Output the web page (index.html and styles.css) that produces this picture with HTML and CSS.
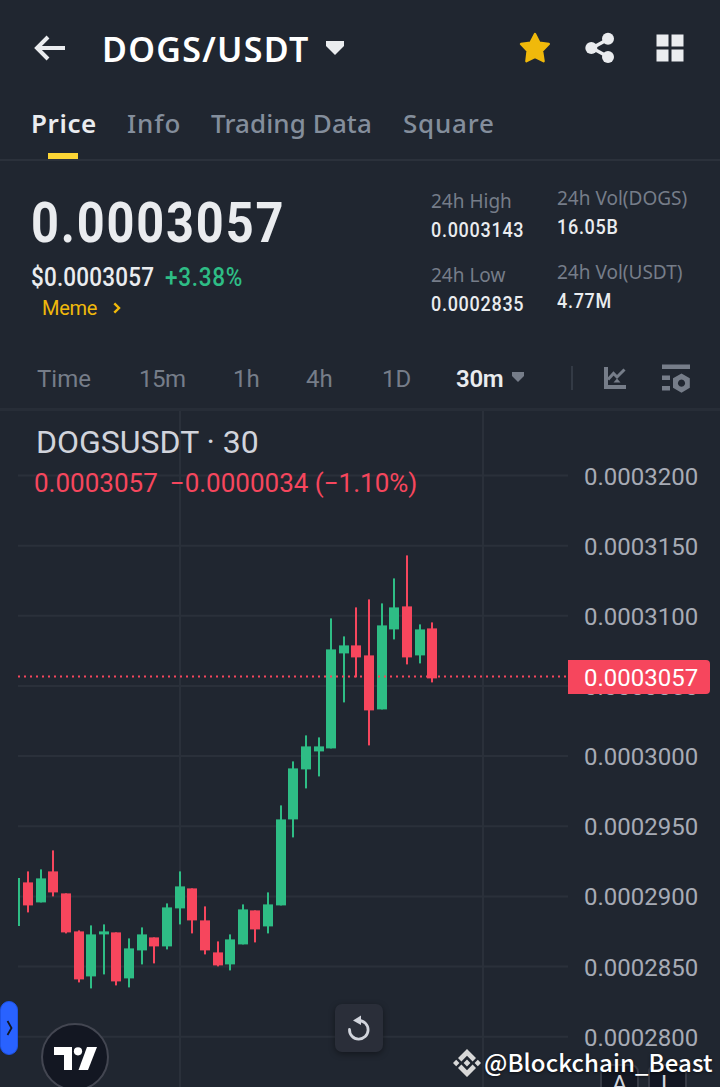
FILE: index.html
```html
<!DOCTYPE html>
<html lang="en">
<head>
  <meta charset="UTF-8" />
  <meta name="viewport" content="width=device-width, initial-scale=1.0"/>
  <title>DOGS/USDT</title>
  <link rel="stylesheet" href="styles.css">
</head>
<body>
  <header class="topbar">
    <svg class="back" width="32" height="26" viewBox="0 0 32 26"><path d="M14 2 L3 13 L14 24 M3 13 H31" fill="none" stroke="#eaecef" stroke-width="4"/></svg>
    <h1>DOGS/USDT</h1>
    <svg class="caret" width="18" height="14" viewBox="0 0 18 14"><path d="M0 0H18V5L9 14L0 5Z" fill="#eaecef"/></svg>
    <svg class="star" width="32" height="32" viewBox="0 0 32 32"><path d="M16 2 L20.3 10.6 L29.8 12 L23 18.8 L24.6 29.2 L16 25 L7.4 29.2 L8.6 18.8 L2 12 L11.6 10.6 Z" fill="#f0b90b" stroke="#f0b90b" stroke-width="2.4" stroke-linejoin="round"/></svg>
    <svg class="share" width="30" height="32" viewBox="0 0 30 32"><path d="M23.5 7 L7 16 L23.5 25" fill="none" stroke="#eaecef" stroke-width="3.4"/><circle cx="6.3" cy="16" r="6" fill="#eaecef"/><circle cx="23" cy="6.8" r="6" fill="#eaecef"/><circle cx="23" cy="25" r="6" fill="#eaecef"/></svg>
    <svg class="grid" width="28" height="28" viewBox="0 0 28 28"><path d="M0.5 0.5h12v12h-12zM15.5 0.5h12v12h-12zM0.5 15.5h12v12h-12zM15.5 15.5h12v12h-12z" fill="#eaecef"/></svg>
  </header>

  <nav class="tabs">
    <a class="tab active">Price</a>
    <a class="tab info">Info</a>
    <a class="tab trading">Trading Data</a>
    <a class="tab square">Square</a>
  </nav>

  <section class="summary">
    <div class="price-box">
      <div class="price">0.0003057</div>
      <div class="sub"><span class="usd">$0.0003057</span><span class="change">+3.38%</span></div>
      <div class="tag"><span>Meme</span><svg width="8" height="12" viewBox="0 0 8 12"><path d="M1.3 1.3 L6 6 L1.3 10.7" fill="none" stroke="#f0b90b" stroke-width="2.4"/></svg></div>
    </div>
    <dl class="stats range">
      <dt>24h High</dt><dd>0.0003143</dd>
      <dt>24h Low</dt><dd>0.0002835</dd>
    </dl>
    <dl class="stats volume">
      <dt>24h Vol(DOGS)</dt><dd>16.05B</dd>
      <dt>24h Vol(USDT)</dt><dd>4.77M</dd>
    </dl>
  </section>

  <div class="intervals">
    <span class="t-time">Time</span>
    <span class="t-15m">15m</span>
    <span class="t-1h">1h</span>
    <span class="t-4h">4h</span>
    <span class="t-1d">1D</span>
    <span class="t-30m">30m</span>
    <svg class="small-caret" width="12" height="10" viewBox="0 0 12 10"><path d="M0 0H12V4L6 10L0 4Z" fill="#767d89"/></svg>
    <i class="divider"></i>
    <svg class="ind" width="22" height="22" viewBox="0 0 22 22"><path d="M2 0V20H22" fill="none" stroke="#767d89" stroke-width="4"/><path d="M4 12.5L9.5 6.5L13 10L20.5 2.5" fill="none" stroke="#767d89" stroke-width="3"/><path d="M9.5 15.5L13 11.5L16.5 15.5Z" fill="#767d89"/></svg>
    <svg class="settings" width="28" height="29" viewBox="0 0 28 29"><path d="M0 0.5h28v4.5H0zM0 11.5h8v4.5H0zM0 22h8v4.5H0z" fill="#767d89"/><path d="M19.5 9.5L27.8 14.2V23.8L19.5 28.8L11 23.8V14.2ZM19.5 15.6a3.6 3.6 0 1 0 .01 0Z" fill="#767d89" fill-rule="evenodd"/></svg>
  </div>

  <main class="chart">
    <svg class="plot" width="720" height="676" viewBox="0 411 720 676">
      <g id="gridlines"></g>
      <g id="candles"></g>
      <path class="last-line" d="M18 676.5H568"/>
      <g id="scale"></g>
      <path d="M568 660H706a4 4 0 0 1 4 4V690a4 4 0 0 1 -4 4H568Z" fill="#f6465d"/>
      <text class="last-price" x="584" y="686">0.0003057</text>
    </svg>

    <div class="legend">
      <div class="symbol">DOGSUSDT · 30</div>
      <div class="ohlc"><span>0.0003057</span><span>−0.0000034 (−1.10%)</span></div>
    </div>

    <div class="drawer"><svg width="8" height="16" viewBox="0 0 8 16"><path d="M1.5 1L5.5 8L1.5 15" fill="none" stroke="#131722" stroke-width="1.8"/></svg></div>
    <div class="tv-logo"><svg width="44" height="24" viewBox="0 0 44 24"><path d="M0 0H18V23H10V8H0Z" fill="#fff"/><circle cx="24" cy="4.3" r="4.1" fill="#fff"/><path d="M33 0H43L34 23H24.5Z" fill="#fff"/></svg></div>
    <div class="reset"><svg width="24" height="28" viewBox="0 0 24 28"><path d="M2.5 15.5A9.3 9.3 0 1 0 12 6.5" fill="none" stroke="#d1d4dc" stroke-width="2.8" stroke-linecap="round"/><path d="M14 1.5V11L6 6.6Z" fill="#d1d4dc"/></svg></div>
    <div class="modes"><b>A</b><b>L</b></div>
    <div class="watermark">
      <svg width="28" height="28" viewBox="0 0 28 28"><g fill="#d8d8d8"><path d="M14 0L23 9L19.6 12.4L14 6.8L8.4 12.4L5 9Z"/><path d="M14 28L23 19L19.6 15.6L14 21.2L8.4 15.6L5 19Z"/><path d="M14 10.6L17.4 14L14 17.4L10.6 14ZM3.2 10.8L6.4 14L3.2 17.2L0 14ZM24.8 10.8L28 14L24.8 17.2L21.6 14Z"/></g></svg>
      <span>@Blockchain_Beast</span>
    </div>
  </main>

  <script>
    // [x, body top, body bottom, high, low, up]
    const candles = [
      [23, 882, 905, 871, 912, 0], [36, 878, 902, 869, 902, 1], [48, 871, 892, 850, 896, 0],
      [61, 893, 932, 893, 933, 0], [74, 931, 979, 930, 982, 0], [86, 934, 976, 925, 988, 1],
      [99, 931, 934, 924, 974, 1], [111, 932, 981, 932, 985, 0], [124, 948, 978, 938, 987, 1],
      [137, 934, 950, 927, 964, 1], [149, 937, 946, 937, 963, 0], [162, 907, 946, 903, 949, 1],
      [175, 886, 908, 871, 924, 1], [187, 888, 920, 888, 933, 0], [200, 920, 950, 906, 954, 0],
      [213, 952, 965, 941, 966, 0], [225, 939, 964, 934, 970, 1], [238, 909, 944, 904, 944, 1],
      [250, 910, 929, 910, 942, 0], [263, 904, 926, 892, 933, 1], [276, 819, 905, 805, 905, 1],
      [288, 768, 819, 761, 837, 1], [301, 746, 769, 735, 788, 1], [314, 746, 751, 737, 776, 1],
      [326, 649, 748, 618, 748, 1], [339, 645, 653, 636, 702, 1], [351, 645, 657, 607, 677, 0],
      [364, 655, 710, 599, 745, 0], [377, 625, 709, 603, 709, 1], [389, 607, 629, 578, 639, 1],
      [402, 606, 657, 555, 664, 0], [415, 629, 655, 624, 663, 1], [427, 628, 678, 622, 682, 0]
    ];
    const prices = ["0.0003200", "0.0003150", "0.0003100", "0.0003050", "0.0003000", "0.0002950", "0.0002900", "0.0002850", "0.0002800"];

    let bars = '<rect class="up" x="18" y="878" width="2" height="48"/>';
    candles.forEach(([x, top, bottom, high, low, up]) => {
      const cls = up ? "up" : "down";
      bars += `<rect class="${cls}" x="${x + 4}" y="${high + 0.4}" width="2" height="${low - high}"/>`;
      bars += `<rect class="${cls}" x="${x}" y="${top + 0.4}" width="10" height="${bottom - top}"/>`;
    });
    document.getElementById("candles").innerHTML = bars;

    let lines = '<path d="M180 408V1087M483 408V1087"/>';
    let labels = "";
    prices.forEach((p, i) => {
      const y = 475.5 + i * 70.15;
      lines += `<path d="M18 ${y}H568"/>`;
      labels += `<text x="584" y="${y + 9}">${p}</text>`;
    });
    document.getElementById("gridlines").innerHTML = lines;
    document.getElementById("scale").innerHTML = labels;
  </script>
</body>
</html>
```
FILE: styles.css
```css
* { box-sizing: border-box; }
body { margin: 0; width: 720px; height: 1087px; overflow: hidden; background: #202630; color: #eaecef; font-family: Roboto, sans-serif; }
svg { display: block; flex: none; }

.topbar { display: flex; align-items: center; height: 96px; padding-left: 34px; }
h1 { margin: 2px 0 0 36px; width: 224px; font: 600 34px/40px "Noto Sans", sans-serif; letter-spacing: 1.3px; color: #fff; white-space: nowrap; }
.star { margin-left: 175px; }
.share { margin-left: 34px; }
.grid { margin-left: 41px; }

.tabs { display: flex; height: 65px; border-bottom: 2px solid #2b313b; font: 500 26px/54px "Noto Sans", sans-serif; color: #848e9c; white-space: nowrap; padding-left: 31px; }
.tab { position: relative; letter-spacing: 0.6px; width: 96px; }
.tab.active { color: #eaecef; font-weight: 600; }
.tab.active::after { content: ""; position: absolute; left: 17px; bottom: 0; width: 30px; height: 6px; background: #fcd535; }
.tab.info { width: 84px; letter-spacing: 0.9px; }
.tab.trading { width: 192px; letter-spacing: 0.1px; }
.tab.square { letter-spacing: 0.8px; }

.summary { display: flex; height: 189px; }
.price-box { width: 400px; padding-left: 31px; }
.price { margin-top: 34px; font-size: 56px; line-height: 56px; font-weight: 700; letter-spacing: 2.1px; transform: scaleX(0.87); transform-origin: 0 0; }
.sub { display: flex; margin-top: 13px; font-size: 25px; line-height: 28px; font-weight: 500; }
.usd { width: 134px; letter-spacing: 0.2px; transform: scaleX(0.9); transform-origin: 0 0; }
.change { color: #2ebd85; letter-spacing: 0.8px; transform: scaleX(0.9); transform-origin: 0 0; }
.tag { display: flex; align-items: center; gap: 16px; margin: 4px 0 0 11px; font-size: 20px; line-height: 24px; color: #f0b90b; letter-spacing: -0.3px; }
.stats { margin: 0; padding-top: 28px; width: 126px; margin-left: 31px; white-space: nowrap; }
.stats.volume { padding-top: 25px; margin-left: 0; }
dt { font: 400 19px/24px "Noto Sans", sans-serif; color: #767d89; }
dd { margin: 5px 0 21px; font-size: 20px; line-height: 24px; font-weight: 500; letter-spacing: 0.8px; transform: scaleX(0.9); transform-origin: 0 0; }

.intervals { display: flex; align-items: center; height: 61px; padding: 0 0 1px 37px; border-bottom: 3px solid #272d37; font-size: 24px; color: #767d89; }
.t-time { width: 102px; }
.t-15m { width: 94px; letter-spacing: -0.5px; }
.t-1h { width: 73px; }
.t-4h { width: 76px; }
.t-1d { width: 74px; }
.t-30m { width: 56px; color: #eaecef; font-weight: 600; letter-spacing: -0.3px; }
.small-caret { margin-top: -3px; }
.divider { width: 2px; height: 24px; margin: -2px 0 0 47px; background: #333a45; }
.ind { margin: -2px 0 0 31px; }
.settings { margin-left: 36px; }

.chart { position: relative; height: 676px; }
.up { fill: #2ebd85; }
.down { fill: #f6465d; }
#gridlines path { stroke: #2a303a; stroke-width: 2; }
.last-line { fill: none; stroke: #f6465d; stroke-width: 2; stroke-dasharray: 2 4; }
#scale text { font-size: 24px; fill: #a7abb5; }
.last-price { font-size: 24px; fill: #fff; }

.legend { position: absolute; left: 34px; top: 13px; white-space: nowrap; }
.symbol { padding-left: 2px; font-size: 32px; line-height: 36px; color: #d1d4dc; }
.ohlc { display: flex; gap: 12px; margin-top: 8px; font-size: 26px; line-height: 30px; color: #f6465d; }

.drawer { position: absolute; left: 0; top: 590px; width: 18px; height: 54px; border-radius: 9px; background: #2962ff; border: 1px solid #1e53e5; padding: 18px 0 0 5px; }
.tv-logo { position: absolute; left: 41px; top: 612px; width: 68px; height: 68px; border-radius: 50%; border: 2px solid #434651; background: #131722; padding: 22px 0 0 11px; }
.reset { position: absolute; left: 335px; top: 593px; width: 48px; height: 48px; border-radius: 7px; background: #2a2e39; box-shadow: 0 2px 6px rgba(0,0,0,0.4); padding: 10px 0 0 12px; }
.modes { position: absolute; left: 600px; top: 653px; display: flex; gap: 9px; }
.modes b { width: 39px; height: 40px; border: 2px solid #363a45; border-radius: 8px; background: #131722; font-size: 24px; line-height: 37px; font-weight: 400; text-align: center; color: #d1d4dc; }
.watermark { position: absolute; left: 453px; top: 632px; display: flex; align-items: center; gap: 3px; height: 40px; font: 500 24px/38px "Noto Sans CJK SC", sans-serif; color: #fff; white-space: nowrap; text-shadow: 0 1px 3px rgba(0,0,0,0.6); }
.watermark span { margin-top: -2px; letter-spacing: 0.1px; }
```
